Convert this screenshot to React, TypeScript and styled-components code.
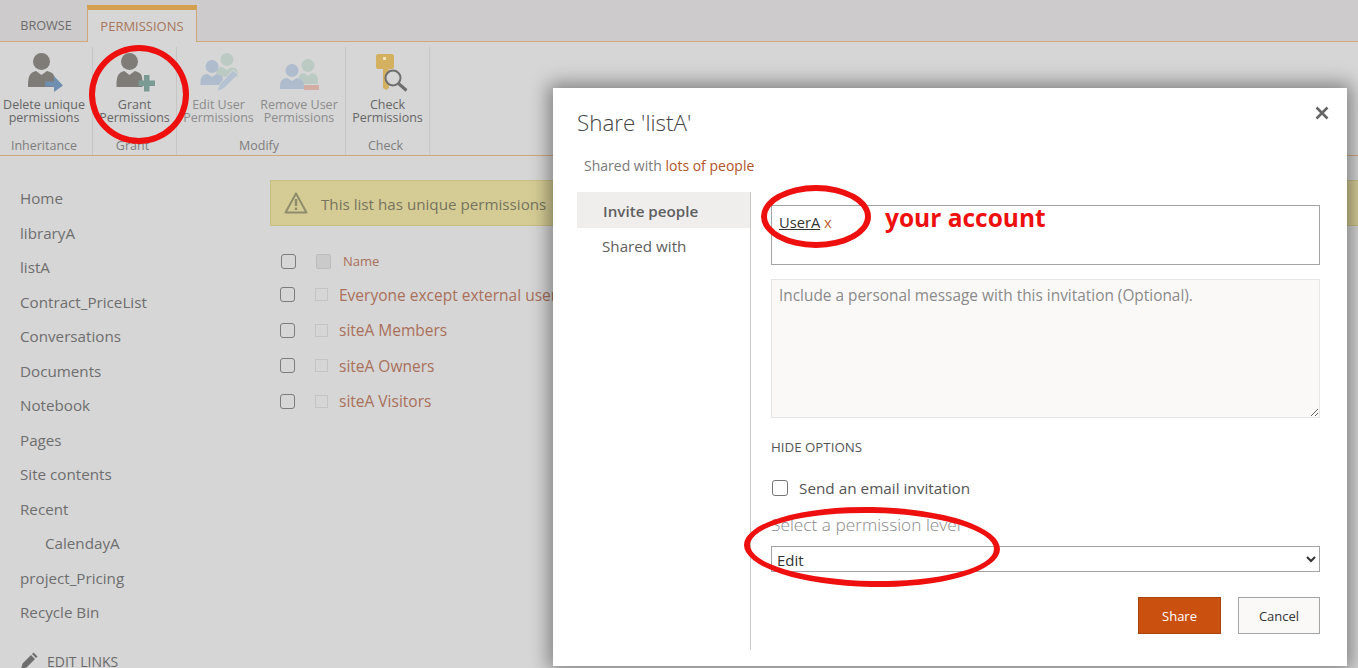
import React from 'react';
import styled, { createGlobalStyle } from 'styled-components';

const GlobalStyle = createGlobalStyle`
  html, body { margin: 0; padding: 0; height: 100%; overflow: hidden; background: #d6d6d6; }
  body { font-family: "Open Sans", "Noto Sans", sans-serif; }
  * { box-sizing: border-box; }
`;

const navItems = ['Home', 'libraryA', 'listA', 'Contract_PriceList', 'Conversations', 'Documents', 'Notebook', 'Pages', 'Site contents', 'Recent'];
const navItemsAfter = ['project_Pricing', 'Recycle Bin'];
const rows = ['Everyone except external users', 'siteA Members', 'siteA Owners', 'siteA Visitors'];

// head and shoulders, x/y is the left end of the shoulders and the top of the head
function Person({ x, y, w, h, r, fill }: { x: number; y: number; w: number; h: number; r: number; fill: string }) {
  const cx = x + w / 2;
  const neck = y + r * 2;
  const bottom = y + h;
  return (
    <>
      <circle cx={cx} cy={y + r} r={r} fill={fill} />
      <path
        d={`M${x} ${bottom}c0-${h * 0.3} 1-${h * 0.42} ${w * 0.3}-${bottom - neck - 1}l${w * 0.2} ${h * 0.12} ${w * 0.2}-${h * 0.12}c${w * 0.29} 2 ${w * 0.3} ${h * 0.12} ${w * 0.3} ${bottom - neck - 1}z`}
        fill={fill}
      />
    </>
  );
}

function DeleteIcon() {
  return (
    <svg width="38" height="39" viewBox="0 0 38 39">
      <Person x={3} y={0} w={27} h={34} r={8.5} fill="#7f7b76" />
      <path d="M20 28.500h9V23l9 9.500L29 39v-5.500h-9z" fill="#6f8fb0" />
    </svg>
  );
}

function GrantIcon() {
  return (
    <svg width="41" height="39" viewBox="0 0 41 39">
      <Person x={2.500} y={0} w={26} h={34} r={8.500} fill="#7f7b76" />
      <path d="M30 22h5.500v5.500H41V33h-5.500v5.500H30V33h-5.500v-5.500H30z" fill="#7b9a94" />
    </svg>
  );
}

function EditUserIcon() {
  return (
    <svg width="40" height="39" viewBox="0 0 40 39">
      <Person x={17} y={0} w={22} h={24} r={6.500} fill="#bccac4" />
      <Person x={1.500} y={7} w={23} h={25} r={6.500} fill="#aebccd" />
      <path d="M18 38.500l2.500-7L34 17l5 4.500-14 14z" fill="#b4c2d2" stroke="#d6d6d6" strokeWidth="1" />
    </svg>
  );
}

function RemoveUserIcon() {
  return (
    <svg width="40" height="35" viewBox="0 0 40 35">
      <Person x={19} y={2} w={20} h={25} r={6.500} fill="#bccac4" />
      <Person x={1} y={7} w={24} h={25} r={6.500} fill="#aebccd" />
      <rect x="25" y="28" width="15" height="5" fill="#d3aca3" />
    </svg>
  );
}

function CheckIcon() {
  return (
    <svg width="40" height="39" viewBox="0 0 40 39">
      <path d="M10 1h14c1 0 2 1 2 2v11c0 1-1 2-2 2h-3v19l-3 2-3-2V16h-5c-1 0-2-1-2-2V3c0-1 1-2 2-2z" fill="#d3b160" />
      <rect x="15" y="4" width="3" height="3" fill="#f0e3bd" />
      <circle cx="25" cy="25" r="7.500" fill="#d6d6d6" stroke="#6e6e6e" strokeWidth="2" />
      <path d="M30.500 30.500l8 7" stroke="#6e6e6e" strokeWidth="3" />
    </svg>
  );
}

function WarningIcon() {
  return (
    <svg width="24" height="22" viewBox="0 0 24 22">
      <path d="M12 1.500L1.500 20.500h21z" fill="none" stroke="#8f8c6c" strokeWidth="2" strokeLinejoin="round" />
      <path d="M12 7v7M12 15.500v2.500" stroke="#8f8c6c" strokeWidth="2.500" />
    </svg>
  );
}

export default function App() {
  return (
    <Page>
      <GlobalStyle />
      <TabBar>
        <BrowseTab>BROWSE</BrowseTab>
        <ActiveTab>PERMISSIONS</ActiveTab>
      </TabBar>
      <Ribbon>
        <Group>
          <Commands>
            <Command $width={88} $trail={4}><IconSlot><DeleteIcon /></IconSlot><CommandLabel>Delete unique<br />permissions</CommandLabel></Command>
          </Commands>
          <GroupName>Inheritance</GroupName>
        </Group>
        <Group>
          <Commands>
            <Command $width={83}><IconSlot><GrantIcon /></IconSlot><CommandLabel>Grant<br />Permissions</CommandLabel></Command>
          </Commands>
          <GroupName>Grant</GroupName>
        </Group>
        <Group>
          <Commands>
            <Command $width={83} $faded><IconSlot><EditUserIcon /></IconSlot><CommandLabel>Edit User<br />Permissions</CommandLabel></Command>
            <Command $width={78} $trail={7} $faded><IconSlot><RemoveUserIcon /></IconSlot><CommandLabel>Remove User<br />Permissions</CommandLabel></Command>
          </Commands>
          <GroupName>Modify</GroupName>
        </Group>
        <Group>
          <Commands>
            <Command $width={83}><IconSlot><CheckIcon /></IconSlot><CommandLabel>Check<br />Permissions</CommandLabel></Command>
          </Commands>
          <GroupName>Check</GroupName>
        </Group>
      </Ribbon>

      <Body>
        <SideNav>
          {navItems.map(item => <NavItem key={item}>{item}</NavItem>)}
          <NavItem $nested>CalendayA</NavItem>
          {navItemsAfter.map(item => <NavItem key={item}>{item}</NavItem>)}
          <EditLinks>
            <svg width="18" height="18" viewBox="0 0 18 18">
              <path d="M1 17l1.500-5.500 8.500-8.500 4 4-8.500 8.500zM12 2l1.500-1.500 4 4L16 6z" fill="#6d6d6d" />
            </svg>
            EDIT LINKS
          </EditLinks>
        </SideNav>
        <Main>
          <Callout>
            <WarningIcon />
            <CalloutText>This list has unique permissions</CalloutText>
          </Callout>
          <HeaderRow>
            <RowCheck />
            <HeaderBox />
            <HeaderName>Name</HeaderName>
          </HeaderRow>
          {rows.map(row => (
            <ListRow key={row}>
              <RowCheck />
              <SmallBox />
              <RowLink>{row}</RowLink>
            </ListRow>
          ))}
        </Main>
      </Body>

      <Dialog>
        <CloseButton aria-label="Close">
          <svg width="14" height="14" viewBox="0 0 14 14">
            <path d="M1.500 1.500l11 11M12.500 1.500l-11 11" stroke="#666" strokeWidth="2.600" />
          </svg>
        </CloseButton>
        <DialogTitle>Share 'listA'</DialogTitle>
        <SharedLine>Shared with <SharedLink>lots of people</SharedLink></SharedLine>
        <Columns>
          <TabColumn>
            <DialogTab $active>Invite people</DialogTab>
            <DialogTab>Shared with</DialogTab>
          </TabColumn>
          <FormColumn>
            <PeopleField>
              <UserChip>UserA</UserChip> <ChipRemove>x</ChipRemove>
            </PeopleField>
            <Message placeholder="Include a personal message with this invitation (Optional)." />
            <HideOptions>HIDE OPTIONS</HideOptions>
            <InviteRow>
              <InviteBox type="checkbox" />
              Send an email invitation
            </InviteRow>
            <LevelLabel>Select a permission level</LevelLabel>
            <LevelSelect defaultValue="Edit">
              <option>Edit</option>
              <option>Read</option>
            </LevelSelect>
            <Actions>
              <ShareButton>Share</ShareButton>
              <CancelButton>Cancel</CancelButton>
            </Actions>
          </FormColumn>
        </Columns>
      </Dialog>

      <AccountNote>your account</AccountNote>
      <Ring $x={89} $y={45} $w={100} $h={99} />
      <Ring $x={761} $y={185} $w={110} $h={63} />
      <Ring $x={744} $y={507} $w={256} $h={80} $tilt={1} />
    </Page>
  );
}

const Page = styled.div`
  position: relative;
  width: 1358px;
  height: 668px;
  overflow: hidden;
  background: #d6d6d6;
  color: #6a6a6a;
`;

const TabBar = styled.div`
  display: flex;
  align-items: flex-end;
  height: 42px;
  padding-top: 5px;
  background: #cdcbcb;
  border-bottom: 1px solid #d2a878;
`;

const BrowseTab = styled.div`
  width: 87px;
  height: 36px;
  padding-left: 5px;
  font-size: 12.700px;
  line-height: 41px;
  text-align: center;
  color: #6b6b6b;
`;

const ActiveTab = styled.div`
  width: 110px;
  height: 37px;
  margin-bottom: -1px;
  font-size: 13px;
  line-height: 32px;
  text-align: center;
  color: #a8775c;
  background: #d6d6d6;
  border: 1px solid #d2a878;
  border-top: 5px solid #d49f4e;
  border-bottom: 0;
`;

const Ribbon = styled.div`
  display: flex;
  height: 114px;
  padding-top: 5px;
  border-bottom: 1px solid #d2a878;
`;

const Group = styled.div`
  display: flex;
  flex-direction: column;
  border-right: 1px solid #c6c6c6;
  height: 108px;
`;

const Commands = styled.div`
  display: flex;
  flex: 1;
`;

const Command = styled.div<{ $width: number; $trail?: number; $faded?: boolean }>`
  width: ${p => p.$width}px;
  margin-right: ${p => p.$trail ?? 0}px;
  text-align: center;
  color: ${p => (p.$faded ? '#8c8c8c' : '#666')};
`;

const IconSlot = styled.div`
  display: flex;
  justify-content: center;
  align-items: flex-end;
  height: 42px;
  margin-top: 3px;
`;

const CommandLabel = styled.div`
  display: flex;
  justify-content: center;
  margin-top: 6px;
  font-size: 12.500px;
  line-height: 13px;
  white-space: nowrap;
`;

const GroupName = styled.div`
  height: 18px;
  padding-right: 4px;
  font-size: 12.500px;
  line-height: 17px;
  text-align: center;
  color: #7d7d7d;
`;

const Body = styled.div`
  display: flex;
`;

const SideNav = styled.nav`
  width: 270px;
  padding: 25px 0 0 20px;
`;

const NavItem = styled.div<{ $nested?: boolean }>`
  height: 34.500px;
  padding-left: ${p => (p.$nested ? 25 : 0)}px;
  font-size: 15.200px;
  line-height: 34px;
  color: #6e6e6e;
  white-space: nowrap;
`;

const EditLinks = styled.div`
  display: flex;
  align-items: center;
  gap: 9px;
  margin-top: 22px;
  font-size: 14px;
  color: #6a6a6a;
`;

const Main = styled.main`
  flex: 1;
  padding-top: 24px;
`;

const Callout = styled.div`
  display: flex;
  align-items: center;
  gap: 13px;
  height: 46px;
  padding-left: 13px;
  background: #d5cc95;
  border: 1px solid #c8bf85;
  border-right: 0;
`;

const CalloutText = styled.span`
  padding-top: 2px;
  font-size: 15.200px;
  color: #76745f;
`;

const HeaderRow = styled.div`
  display: flex;
  align-items: center;
  height: 32px;
  margin-top: 19px;
  padding-left: 11px;
`;

const ListRow = styled.div`
  display: flex;
  align-items: center;
  height: 35.500px;
  padding-left: 10px;
`;

const RowCheck = styled.span`
  width: 15px;
  height: 15px;
  flex: none;
  border: 1.500px solid #7c7c7c;
  border-radius: 3px;
`;

const HeaderBox = styled.span`
  width: 15px;
  height: 15px;
  margin-left: 20px;
  background: #cacaca;
  border: 1px solid #bdbdbd;
  border-radius: 2px;
`;

const SmallBox = styled.span`
  width: 13px;
  height: 13px;
  margin-left: 20px;
  border: 1px solid #c4c4c4;
`;

const HeaderName = styled.span`
  margin-left: 12px;
  font-size: 13px;
  color: #a9705a;
`;

const RowLink = styled.span`
  margin-left: 11px;
  font-size: 15.500px;
  color: #a9705a;
  white-space: nowrap;
`;

const Dialog = styled.div`
  position: absolute;
  left: 553px;
  top: 88px;
  width: 794px;
  height: 578px;
  padding: 18px 27px 0 24px;
  background: #fff;
  box-shadow: 0 0 18px 4px rgba(0, 0, 0, 0.42);
`;

const CloseButton = styled.button`
  position: absolute;
  top: 18px;
  right: 18px;
  display: flex;
  padding: 0;
  background: none;
  border: 0;
`;

const DialogTitle = styled.h1`
  margin: 0;
  font-size: 22.400px;
  font-weight: 300;
  line-height: 33px;
  color: #444;
`;

const SharedLine = styled.div`
  margin: 17px 0 0 7px;
  font-size: 14px;
  line-height: 20px;
  color: #7a7a7a;
`;

const SharedLink = styled.span`
  color: #b1542a;
`;

const Columns = styled.div`
  display: flex;
  margin-top: 16px;
  height: 458px;
`;

const TabColumn = styled.div`
  width: 174px;
  border-right: 1px solid #c8c8c8;
`;

const DialogTab = styled.div<{ $active?: boolean }>`
  height: 36px;
  padding-left: ${p => (p.$active ? 26 : 25)}px;
  font-size: 15.200px;
  font-weight: ${p => (p.$active ? 600 : 400)};
  line-height: ${p => (p.$active ? 39 : 36)}px;
  color: #5e5e5e;
  background: ${p => (p.$active ? '#efeeed' : 'transparent')};
`;

const FormColumn = styled.div`
  flex: 1;
  padding: 13px 0 0 20px;
`;

const PeopleField = styled.div`
  height: 60px;
  padding: 5px 7px;
  font-size: 14.700px;
  line-height: 22px;
  border: 1px solid #a3a3a3;
`;

const UserChip = styled.span`
  color: #333;
  text-decoration: underline;
`;

const ChipRemove = styled.span`
  color: #c0622f;
`;

const Message = styled.textarea`
  display: block;
  width: 100%;
  height: 139px;
  margin-top: 14px;
  padding: 5px 7px;
  font: 15.400px "Open Sans", sans-serif;
  background: #faf9f8;
  border: 1px solid #e8e6e4;
  border-radius: 0;
  outline: none;
  &::placeholder { color: #8a8a8a; opacity: 1; }
`;

const HideOptions = styled.div`
  margin-top: 19px;
  font-size: 13.300px;
  line-height: 20px;
  color: #555;
`;

const InviteRow = styled.label`
  display: flex;
  align-items: center;
  gap: 11px;
  margin-top: 20px;
  padding-left: 1px;
  height: 22px;
  font-size: 15.300px;
  color: #555;
`;

const InviteBox = styled.input`
  appearance: none;
  width: 16px;
  height: 16px;
  margin: 0;
  background: #fff;
  border: 1.500px solid #767676;
  border-radius: 3px;
`;

const LevelLabel = styled.div`
  margin-top: 15px;
  font-size: 17.300px;
  font-weight: 300;
  line-height: 22px;
  color: #8a8a8a;
`;

const LevelSelect = styled.select`
  display: block;
  width: 100%;
  height: 26px;
  margin-top: 10px;
  padding: 2px 0 0 1px;
  font: 15px "Open Sans", sans-serif;
  color: #333;
  background: #fff;
  border: 1px solid #a3a3a3;
  border-radius: 0;
`;

const Actions = styled.div`
  display: flex;
  justify-content: flex-end;
  gap: 17px;
  margin-top: 25px;
`;

const ShareButton = styled.button`
  width: 83px;
  height: 37px;
  font: 13px "Open Sans", sans-serif;
  color: #fff;
  background: #ca5010;
  border: 1px solid #a8430e;
`;

const CancelButton = styled.button`
  width: 82px;
  height: 37px;
  font: 13px "Open Sans", sans-serif;
  color: #333;
  background: #faf9f8;
  border: 1px solid #a3a3a3;
`;

const Ring = styled.div<{ $x: number; $y: number; $w: number; $h: number; $tilt?: number }>`
  position: absolute;
  left: ${p => p.$x}px;
  top: ${p => p.$y}px;
  width: ${p => p.$w}px;
  height: ${p => p.$h}px;
  border: 6px solid #ee0f0f;
  border-radius: 50%;
  transform: rotate(${p => p.$tilt ?? 0}deg);
  pointer-events: none;
`;

const AccountNote = styled.div`
  position: absolute;
  left: 885px;
  top: 201px;
  font-size: 24.500px;
  font-weight: 700;
  line-height: 34px;
  color: #ee0f0f;
  white-space: nowrap;
`;
